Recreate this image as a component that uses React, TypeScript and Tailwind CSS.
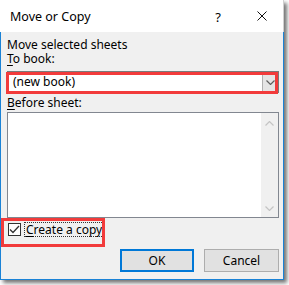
import React from "react";

const Chevron = ({ up = false, color = "#606060" }: { up?: boolean; color?: string }) => (
  <svg width="9" height="5" viewBox="0 0 9 5" className="block">
    <path
      d={up ? "M0.5 4.5 L4.5 0.5 L8.5 4.5" : "M0.5 0.5 L4.5 4.5 L8.5 0.5"}
      fill="none"
      stroke={color}
      strokeWidth="1.2"
    />
  </svg>
);

export default function App() {
  return (
    <div className="w-[289px] h-[285px] bg-white relative overflow-hidden font-['Segoe_UI','Noto_Sans',sans-serif] text-[12px] text-black">
      <div className="w-[284px] h-[280px] flex flex-col shadow-[3px_3px_4px_rgba(0,0,0,0.55)]">
        {/* title bar */}
        <div className="h-[32px] bg-white flex items-center border-r border-[#d0d0d0] shrink-0">
          <span className="pl-[10px] text-[12.5px] leading-[16px] mt-[1px]">Move or Copy</span>
          <span className="ml-auto mr-[36px] text-[13px] leading-[16px] mt-[1px]">?</span>
          <svg width="10" height="10" viewBox="0 0 10 10" className="mr-[16px]">
            <path d="M0.5 0.5 L9.5 9.5 M9.5 0.5 L0.5 9.5" stroke="#111" strokeWidth="1" />
          </svg>
        </div>
        {/* body */}
        <div className="flex-1 bg-[#f0f0f0] border-l border-r border-b border-[#1a82d6] pl-[6px] pr-[4px] pt-[6px] flex flex-col leading-[14px]">
          <div>Move selected sheets</div>
          <div>
            <span className="underline underline-offset-2">T</span>o book:
          </div>
          <div className="mt-[5px] h-[22px] border border-[#7a7a7a] bg-white flex">
            <span className="pl-[5px] self-center leading-[14px]">(new book)</span>
            <div className="ml-auto w-[16px] bg-[#e5e5e5] border-l border-[#b0b0b0] flex items-center justify-center">
              <Chevron />
            </div>
          </div>
          <div className="mt-[3px]">
            <span className="underline underline-offset-2">B</span>efore sheet:
          </div>
          <div className="mt-[2px] h-[106px] border border-[#828790] bg-white flex">
            <div className="ml-auto w-[17px] bg-[#f0f0f0] flex flex-col items-center justify-between pt-[8px] pb-[6px]">
              <Chevron up color="#c4c4c4" />
              <Chevron color="#c4c4c4" />
            </div>
          </div>
          <div className="mt-[5px] h-[13px] flex items-center">
            <div className="ml-[1px] w-[13px] h-[13px] border border-[#333] bg-white flex items-center justify-center">
              <svg width="11" height="9" viewBox="0 0 11 9">
                <path d="M1 4.5 L4 7.5 L10 1" fill="none" stroke="#333" strokeWidth="1.3" />
              </svg>
            </div>
            <span className="ml-[3px] px-[1px] border border-dotted border-[#333] leading-[13px]">
              <span className="underline underline-offset-2">C</span>reate a copy
            </span>
          </div>
          <div className="mt-[13px] flex justify-end gap-[10px]">
            <button className="w-[74px] h-[23px] bg-[#e1e1e1] border-2 border-[#0078d7] leading-[14px]">OK</button>
            <button className="w-[75px] h-[23px] bg-[#e1e1e1] border border-[#adadad] leading-[14px]">Cancel</button>
          </div>
        </div>
      </div>
      {/* red annotation boxes */}
      <div className="absolute left-[6px] top-[72px] w-[272px] h-[22px] border-[3px] border-[#f23b3b]" />
      <div className="absolute left-[1px] top-[218px] w-[104px] h-[29px] border-[3px] border-[#f23b3b]" />
    </div>
  );
}
